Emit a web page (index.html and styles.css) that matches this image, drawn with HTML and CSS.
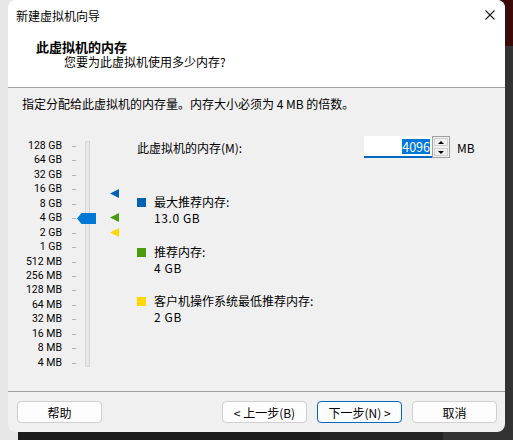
FILE: index.html
```html
<!DOCTYPE html>
<html lang="zh-CN">
<head>
    <meta charset="UTF-8">
    <meta name="viewport" content="width=device-width, initial-scale=1.0">
    <title>新建虚拟机向导</title>
    <link rel="stylesheet" href="styles.css">
</head>
<body>
    <div class="window">
        <div class="header">
            <div class="titlebar">
                <span class="title">新建虚拟机向导</span>
                <span class="close">
                    <svg width="10" height="10" viewBox="0 0 10 10">
                        <path d="M0.5 0.5 L9.5 9.5 M9.5 0.5 L0.5 9.5" stroke="#1a1a1a" stroke-width="1.1" fill="none"/>
                    </svg>
                </span>
            </div>
            <div class="head-title">此虚拟机的内存</div>
            <div class="head-sub">您要为此虚拟机使用多少内存?</div>
        </div>

        <div class="intro">指定分配给此虚拟机的内存量。内存大小必须为 4 MB 的倍数。</div>

        <div class="main">
            <div class="scale">
                <div class="labels">
                    <div>128 GB</div>
                    <div>64 GB</div>
                    <div>32 GB</div>
                    <div>16 GB</div>
                    <div>8 GB</div>
                    <div>4 GB</div>
                    <div>2 GB</div>
                    <div>1 GB</div>
                    <div>512 MB</div>
                    <div>256 MB</div>
                    <div>128 MB</div>
                    <div>64 MB</div>
                    <div>32 MB</div>
                    <div>16 MB</div>
                    <div>8 MB</div>
                    <div>4 MB</div>
                </div>
                <div class="ticks">
                    <i></i><i></i><i></i><i></i><i></i><i></i><i></i><i></i>
                    <i></i><i></i><i></i><i></i><i></i><i></i><i></i><i></i>
                </div>
                <div class="track">
                    <div class="thumb"></div>
                </div>
                <div class="markers">
                    <span class="marker max"></span>
                    <span class="marker rec"></span>
                    <span class="marker min"></span>
                </div>
            </div>

            <div class="panel">
                <div class="mem-row">
                    <span class="mem-label">此虚拟机的内存(M):</span>
                    <div class="spin">
                        <div class="spin-input"><span class="sel">4096</span></div>
                        <div class="spin-btns">
                            <div class="spin-btn"><span class="up"></span></div>
                            <div class="spin-btn"><span class="down"></span></div>
                        </div>
                    </div>
                    <span class="unit">MB</span>
                </div>

                <div class="legend">
                    <div class="item">
                        <span class="swatch max"></span>
                        <div>
                            <div>最大推荐内存:</div>
                            <div class="value">13.0 GB</div>
                        </div>
                    </div>
                    <div class="item">
                        <span class="swatch rec"></span>
                        <div>
                            <div>推荐内存:</div>
                            <div class="value">4 GB</div>
                        </div>
                    </div>
                    <div class="item">
                        <span class="swatch min"></span>
                        <div>
                            <div>客户机操作系统最低推荐内存:</div>
                            <div class="value">2 GB</div>
                        </div>
                    </div>
                </div>
            </div>
        </div>

        <div class="footer">
            <button class="btn">帮助</button>
            <div class="nav">
                <button class="btn">&lt; 上一步(B)</button>
                <button class="btn primary">下一步(N) &gt;</button>
                <button class="btn">取消</button>
            </div>
        </div>
    </div>
</body>
</html>
```

FILE: styles.css
```css
body, html {
    margin: 0;
    padding: 0;
    height: 440px;
    overflow: hidden;
    font-family: "Noto Sans CJK SC", "Noto Sans", sans-serif;
    font-size: 12px;
    color: #000;
}
body {
    background:
        linear-gradient(#3b0b0b, #3b0b0b) right top / 287px 46px no-repeat,
        linear-gradient(to right, #e6e6e6 0 18px, #1b1b1b 18px 320px, #242424 320px 443px, #333 443px);
}
.window {
    width: 497px;
    height: 432px;
    margin-left: 8px;
    border-radius: 8px;
    background: #f0f0f0;
    overflow: hidden;
    display: flex;
    flex-direction: column;
}

/* header */
.header {
    background: #fff;
    height: 87px;
    border-bottom: 1px solid #a0a0a0;
    flex: none;
}
.titlebar {
    height: 30px;
    display: flex;
    align-items: center;
    justify-content: space-between;
    padding-left: 8px;
}
.close {
    width: 30px;
    height: 30px;
    display: flex;
    align-items: center;
    justify-content: center;
}
.head-title {
    margin: 9px 0 0 28px;
    font-size: 13px;
    font-weight: bold;
    line-height: 15px;
}
.head-sub {
    margin-left: 56px;
    line-height: 15px;
}

.intro {
    padding: 8px 0 0 14px;
    line-height: 16px;
}

/* slider */
.main {
    display: flex;
    margin-top: 24px;
}
.scale {
    display: flex;
    flex: none;
}
.labels {
    width: 54px;
    padding-top: 3px;
    text-align: right;
    font-family: Roboto, "Noto Sans", sans-serif;
    font-size: 10.5px;
}
.labels div {
    height: 14.44px;
    line-height: 14.44px;
    white-space: nowrap;
}
.ticks {
    width: 4px;
    margin-left: 10px;
    padding-top: 3px;
}
.ticks i {
    display: block;
    height: 14.44px;
    position: relative;
}
.ticks i::after {
    content: "";
    position: absolute;
    left: 0;
    right: 0;
    top: 7px;
    height: 1px;
    background: #b4b4b4;
}
.track {
    width: 3px;
    height: 224px;
    margin: 5px 0 0 9px;
    border: 1px solid #d6d6d6;
    background: #e8e8e8;
    position: relative;
}
.thumb {
    position: absolute;
    left: -9px;
    top: 71px;
    width: 19px;
    height: 11px;
    background: #0078d7;
    clip-path: polygon(0 50%, 24% 0, 100% 0, 100% 100%, 24% 100%);
}
.markers {
    width: 9px;
    margin-left: 20px;
    position: relative;
}
.marker {
    position: absolute;
    left: 0;
    width: 9px;
    height: 9px;
    clip-path: polygon(0 50%, 100% 0, 100% 100%);
}
.marker.max { top: 53px; background: #0063b1; }
.marker.rec { top: 77px; background: #4a9b0f; }
.marker.min { top: 92px; background: #ffd800; }

/* right panel */
.panel {
    margin-left: 18px;
    flex: 1;
}
.mem-row {
    display: flex;
    align-items: center;
    height: 22px;
}
.mem-label {
    width: 227px;
    flex: none;
}
.spin {
    display: flex;
    height: 22px;
}
.spin-input {
    width: 66px;
    height: 20px;
    background: #fff;
    border-bottom: 2px solid #0067c0;
    display: flex;
    align-items: center;
    justify-content: flex-end;
    padding-right: 2px;
}
.sel {
    background: #0078d7;
    color: #fff;
    line-height: 15px;
    font-size: 12.5px;
}
.spin-btns {
    width: 16px;
    border: 1px solid #a0a0a0;
    display: flex;
    flex-direction: column;
}
.spin-btn {
    flex: 1;
    margin: 1px;
    background: #f0f0f0;
    border: 1px solid #cfcfcf;
    display: flex;
    align-items: center;
    justify-content: center;
}
.up, .down {
    width: 0;
    height: 0;
    border-left: 3px solid transparent;
    border-right: 3px solid transparent;
}
.up { border-bottom: 3px solid #000; }
.down { border-top: 3px solid #000; }
.unit {
    margin-left: 7px;
}

.legend {
    margin-top: 36px;
    display: flex;
    flex-direction: column;
    gap: 17.5px;
}
.item {
    display: flex;
    line-height: 16px;
}
.swatch {
    width: 9px;
    height: 9px;
    margin: 4px 8px 0 0;
    flex: none;
}
.swatch.max { background: #0063b1; }
.swatch.rec { background: #4a9b0f; }
.swatch.min { background: #ffd800; }
.value {
    letter-spacing: 0.6px;
}

/* footer */
.footer {
    margin-top: auto;
    border-top: 1px solid #a0a0a0;
    padding: 9px 8px 9px 9px;
    display: flex;
    justify-content: space-between;
}
.nav {
    display: flex;
    gap: 10px;
}
.btn {
    width: 85px;
    height: 22px;
    padding: 0;
    font-family: inherit;
    font-size: 12px;
    color: #000;
    background: #fdfdfd;
    border: 1px solid #d0d0d0;
    border-radius: 4px;
}
.btn.primary {
    border-color: #0067c0;
}
```
